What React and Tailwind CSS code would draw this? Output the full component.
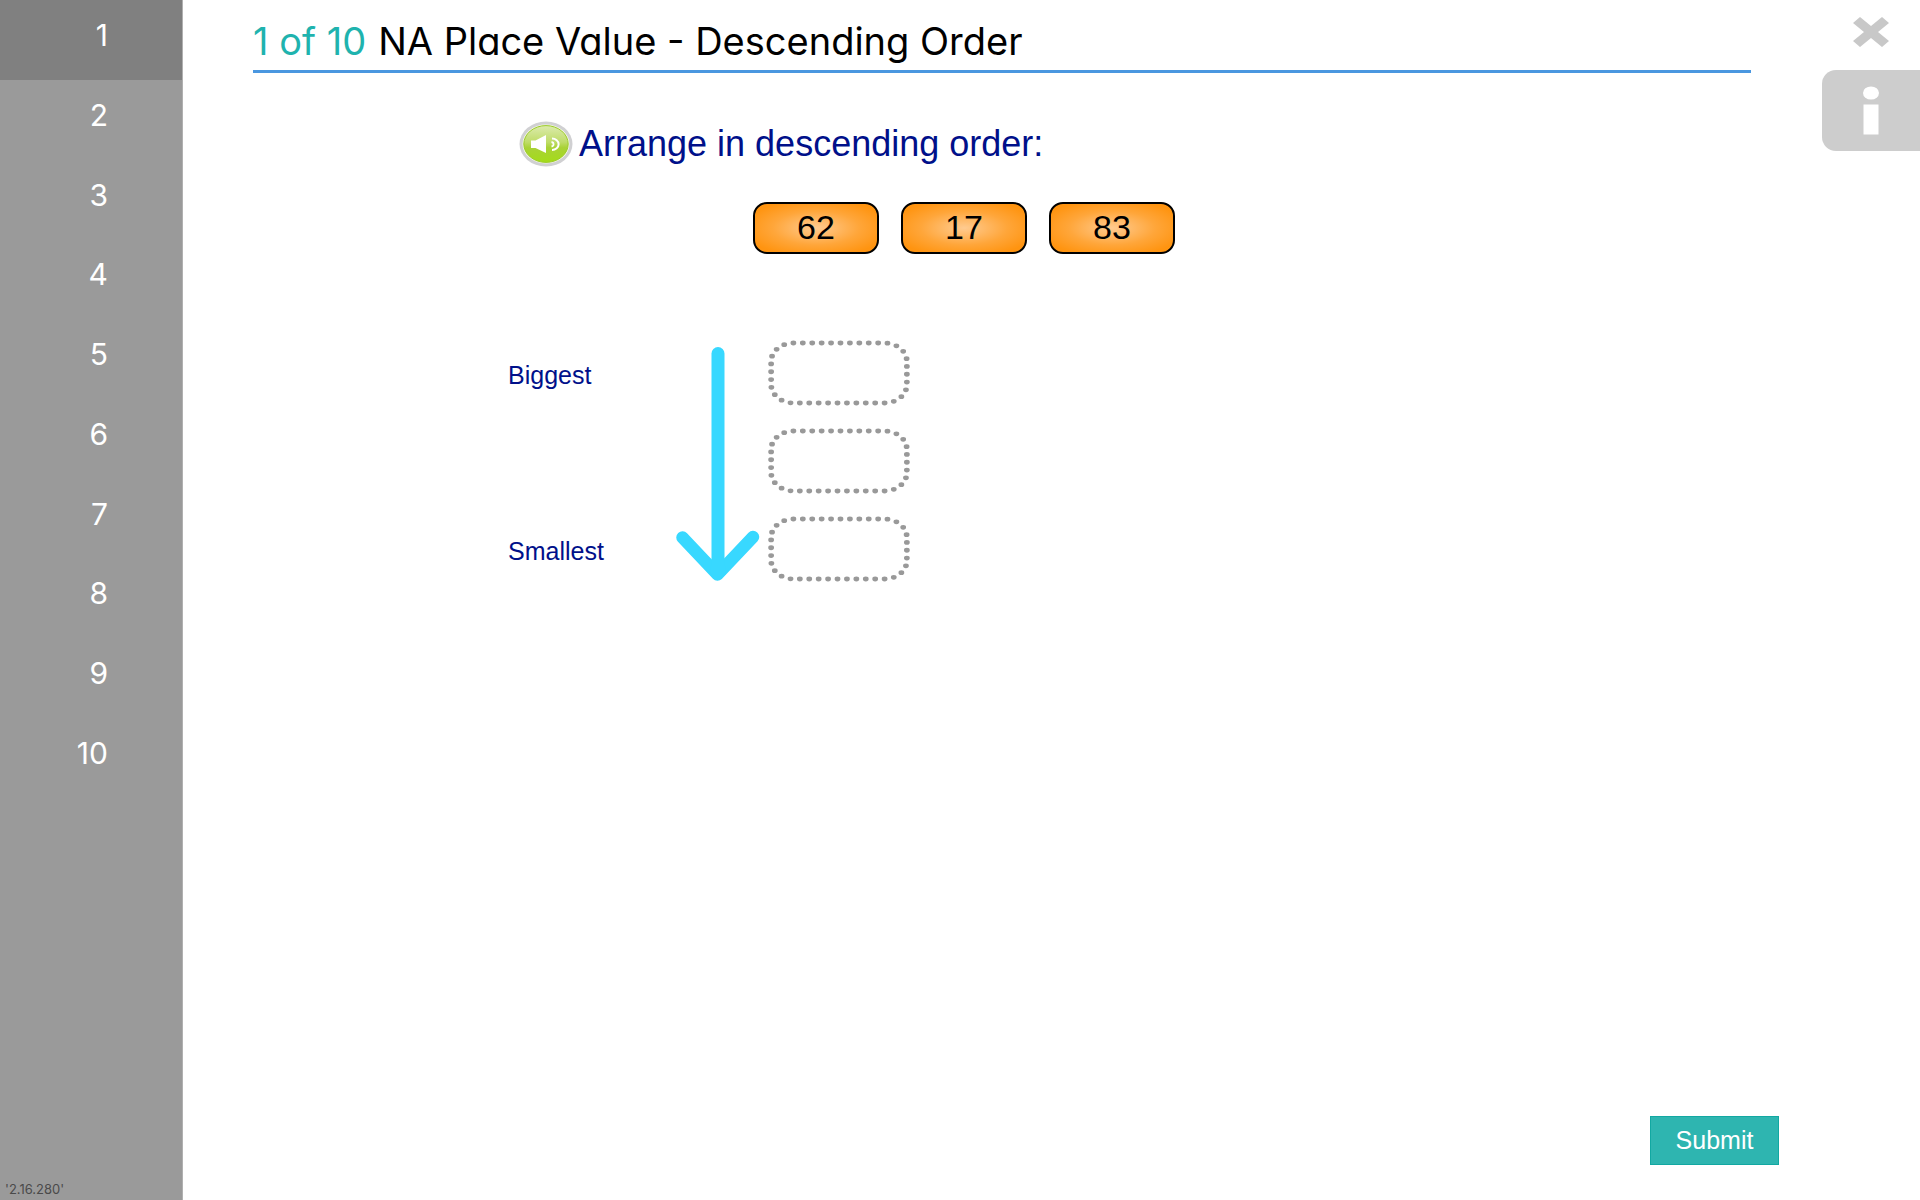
import React, { useState } from 'react';

const QUESTIONS = [1, 2, 3, 4, 5, 6, 7, 8, 9, 10];
const NUMBERS = [62, 17, 83];
const SLOTS = ['Biggest', '', 'Smallest'];

const SpeakerIcon = () => (
  <svg viewBox="0 0 54 46" className="w-[54px] h-[46px]" aria-hidden="true">
    <defs>
      <linearGradient id="speakerFill" x1="0" y1="0" x2="0" y2="1">
        <stop offset="0" stopColor="#dcebad" />
        <stop offset="0.45" stopColor="#bfdc68" />
        <stop offset="0.6" stopColor="#a9d236" />
        <stop offset="1" stopColor="#a4dc18" />
      </linearGradient>
    </defs>
    <ellipse cx="27" cy="23" rx="26.5" ry="22.5" fill="#d0d0d2" />
    <ellipse cx="27" cy="23" rx="23.5" ry="19.6" fill="#f4f8e4" />
    <ellipse cx="27" cy="23" rx="22.2" ry="18.4" fill="url(#speakerFill)" stroke="#9ccb2a" strokeWidth="1" />
    <path d="M12 19.5h4.500L27 14v18L16.500 27H12z" fill="#fff" />
    <path d="M32.500 21a2.600 2.300 0 0 1 0 4.500" fill="none" stroke="#fff" strokeWidth="1.800" />
    <path d="M33 17.500a6.500 5.600 0 0 1 0 11.400" fill="none" stroke="#fff" strokeWidth="2" />
  </svg>
);

const DownArrow = () => (
  <svg viewBox="0 0 84 242" className="w-[84px] h-[242px]" aria-hidden="true">
    <g fill="none" stroke="#38d8ff" strokeLinecap="round" strokeLinejoin="round">
      <path d="M42 13.500V232" strokeWidth="13" />
      <path d="M6.500 197.500L41.500 234.500L77 197" strokeWidth="12.500" />
    </g>
    <path d="M36 218L48 218L50 234L42 240L34 234z" fill="#38d8ff" />
  </svg>
);

const DropSlot = () => (
  <svg viewBox="0 0 118 66" preserveAspectRatio="none" className="w-[142px] h-[66px]" aria-hidden="true">
    <rect
      x="2.600"
      y="3"
      width="112.800"
      height="60"
      rx="18.500"
      fill="none"
      stroke="#999"
      strokeWidth="4.800"
      strokeLinecap="round"
      pathLength="40"
      strokeDasharray="0 1"
    />
  </svg>
);

const Sidebar = ({ current, onSelect }) => (
  <nav className="w-[183px] shrink-0 flex flex-col justify-between bg-[#9a9a9a] border-r border-[#b0b0b0]">
    <ul className="grid grid-rows-10 h-[797px]">
      {QUESTIONS.map((number) => (
        <li key={number}>
          <button
            onClick={() => onSelect(number)}
            className={`w-full h-full pr-[74px] pb-2 text-right text-[30px] text-white ${
              current === number ? 'bg-[#808080]' : ''
            }`}
          >
            {number}
          </button>
        </li>
      ))}
    </ul>
    <p className="pl-[5px] pb-px text-[13px] leading-5 text-[#4a4a4a]">'2.16.280'</p>
  </nav>
);

const App = () => {
  const [current, setCurrent] = useState(1);

  return (
    <div className="flex min-h-screen bg-white font-['Inter',sans-serif] [font-feature-settings:'cv11']">
      <Sidebar current={current} onSelect={setCurrent} />

      <main className="flex-1 flex flex-col justify-between">
        <div className="flex">
          <div className="flex-1 pl-[70px]">
            <header className="h-[73px] pt-[18px] border-b-3 border-[#4a97e0]">
              <h1 className="flex gap-3 text-[38px] leading-[46px] text-black">
                <span className="text-[#1fb3ae]">{current} of 10</span>
                <span>NA Place Value - Descending Order</span>
              </h1>
            </header>

            <section className="pl-[255px] pt-[48px] font-['Liberation_Sans',Arial,sans-serif]">
              <div className="flex items-center gap-1.5 pl-[11px] text-[#00108a]">
                <button aria-label="Listen">
                  <SpeakerIcon />
                </button>
                <h2 className="text-[36px] leading-[46px]">Arrange in descending order:</h2>
              </div>

              <div className="flex gap-[22px] mt-[35px] pl-[245px]">
                {NUMBERS.map((value) => (
                  <button
                    key={value}
                    className="w-[126px] h-[52px] pb-0.5 rounded-[14px] border-2 border-black bg-[radial-gradient(ellipse_at_center,#ffcb90_0%,#ffa63a_50%,#ff9410_85%)] text-[34px] leading-[46px] text-black"
                  >
                    {value}
                  </button>
                ))}
              </div>

              <div className="grid grid-cols-[160px_84px_142px] gap-x-2 mt-[86px] items-center">
                <div className="flex flex-col gap-[22px] text-[25px] text-[#00108a]">
                  {SLOTS.map((label, index) => (
                    <div key={index} className="flex items-center h-[66px] pt-1.5">
                      {label}
                    </div>
                  ))}
                </div>
                <DownArrow />
                <div className="flex flex-col gap-[22px]">
                  {SLOTS.map((label, index) => (
                    <DropSlot key={index} />
                  ))}
                </div>
              </div>
            </section>
          </div>

          <aside className="w-[169px] flex flex-col items-end">
            <button aria-label="Close" className="mt-[17px] mr-[31px]">
              <svg viewBox="0 0 36 30" className="w-[36px] h-[30px]" aria-hidden="true">
                <path
                  d="M7 0L18 9L29 0L36 6L25 15L36 24L29 30L18 21L7 30L0 24L11 15L0 6z"
                  fill="#c8c8c8"
                />
              </svg>
            </button>
            <button
              aria-label="Information"
              className="flex justify-center w-[98px] h-[81px] mt-[23px] pt-[16px] rounded-l-[14px] bg-[#cdcdcd]"
            >
              <svg viewBox="0 0 16 49" className="w-[16px] h-[49px]" aria-hidden="true">
                <ellipse cx="8" cy="7" rx="8" ry="6.600" fill="#fff" />
                <rect x="0.500" y="18.500" width="15" height="30" fill="#fff" />
              </svg>
            </button>
          </aside>
        </div>

        <footer className="flex justify-end pr-[141px] pb-[35px]">
          <button className="w-[129px] h-[49px] border border-[#12a8a2] bg-[#2eb5b0] font-['Liberation_Sans',Arial,sans-serif] text-[25px] text-white">
            Submit
          </button>
        </footer>
      </main>
    </div>
  );
};

export default App;
